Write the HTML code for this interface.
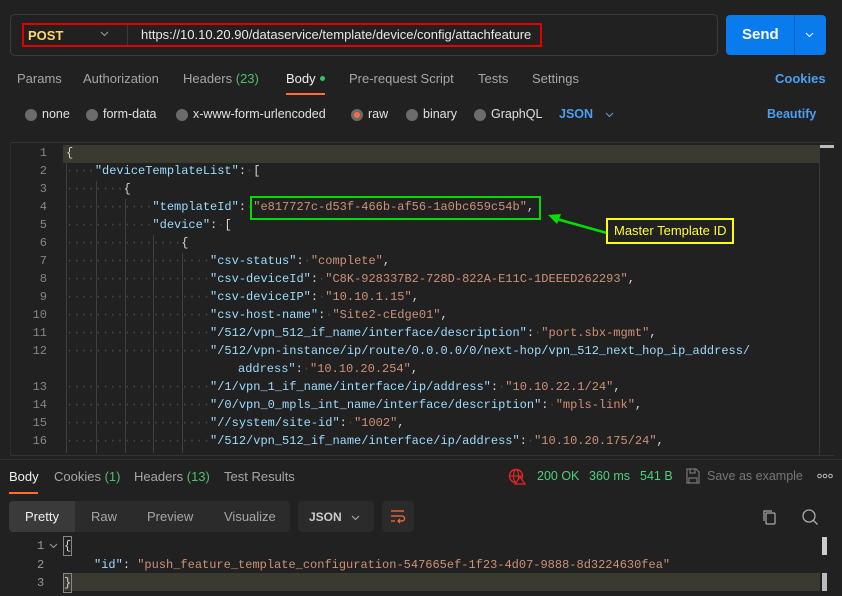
<!DOCTYPE html>
<html><head><meta charset="utf-8">
<style>
*{margin:0;padding:0;box-sizing:border-box}
body{width:842px;height:596px;background:#212121;font-family:"Liberation Sans",sans-serif;color:#d6d6d6;position:relative;overflow:hidden}
.a{position:absolute;white-space:nowrap}
.t{font-size:13px;color:#a6a6a6}
.rd{position:absolute;width:12px;height:12px;border-radius:50%;background:#6b6b6b}
.mono{font-family:"Liberation Mono",monospace;font-size:12px;line-height:18px}
.ln{position:absolute;width:47px;text-align:right;color:#858585}
.k{color:#9cdcfe}.s{color:#ce9178}.p{color:#d4d4d4}.d{color:#4a4a4a}
.g{position:absolute;width:1px;background:#404040}
</style></head><body>
<!-- URL bar -->
<div class="a" style="left:10px;top:14px;width:708px;height:42px;border:1px solid #3c3c3c;border-radius:5px"></div>
<div class="a" style="left:22px;top:23px;width:520px;height:24px;border:2px solid #e00000"></div>
<div class="a" style="left:127px;top:25px;width:1px;height:20px;background:#3a3a3a"></div>
<div class="a" style="left:28px;top:28px;font-size:13px;font-weight:bold;color:#ffd86b">POST</div>
<svg class="a" style="left:100px;top:31px" width="9" height="6"><path d="M1 1l3.5 3.5L8 1" fill="none" stroke="#999" stroke-width="1.1"/></svg>
<div class="a" style="left:141px;top:27px;font-size:13px;color:#e8e8e8">https://10.10.20.90/dataservice/template/device/config/attachfeature</div>
<div class="a" style="left:726px;top:15px;width:100px;height:40px;background:#097bed;border-radius:4px"></div>
<div class="a" style="left:794px;top:15px;width:1px;height:40px;background:#0a62be"></div>
<div class="a" style="left:742px;top:26px;font-size:15px;font-weight:bold;color:#fff">Send</div>
<svg class="a" style="left:805px;top:32px" width="9" height="6"><path d="M1 1l3.5 3.5L8 1" fill="none" stroke="#fff" stroke-width="1.1"/></svg>
<!-- tabs -->
<div class="a t" style="left:17px;top:71px">Params</div>
<div class="a t" style="left:83px;top:71px">Authorization</div>
<div class="a t" style="left:183px;top:71px">Headers <span style="color:#4fbf6e">(23)</span></div>
<div class="a t" style="left:286px;top:71px;color:#f0f0f0">Body</div>
<div class="a" style="left:320px;top:76px;width:5px;height:5px;border-radius:50%;background:#33c46b"></div>
<div class="a" style="left:286px;top:93px;width:39px;height:2px;background:#ff6c37"></div>
<div class="a t" style="left:349px;top:71px">Pre-request Script</div>
<div class="a t" style="left:478px;top:71px">Tests</div>
<div class="a t" style="left:532px;top:71px">Settings</div>
<div class="a" style="left:775px;top:71px;font-size:13px;font-weight:bold;color:#4d9ff0">Cookies</div>
<!-- radios -->
<div class="rd" style="left:25px;top:109px"></div><div class="a" style="left:42px;top:107px;font-size:12.5px;color:#e0e0e0">none</div>
<div class="rd" style="left:86px;top:109px"></div><div class="a" style="left:103px;top:107px;font-size:12.5px;color:#e0e0e0">form-data</div>
<div class="rd" style="left:176px;top:109px"></div><div class="a" style="left:193px;top:107px;font-size:12.5px;color:#e0e0e0">x-www-form-urlencoded</div>
<div class="rd" style="left:351px;top:109px;background:#ff6c37;border:3px solid #6b6b6b"></div><div class="a" style="left:368px;top:107px;font-size:12.5px;color:#e0e0e0">raw</div>
<div class="rd" style="left:406px;top:109px"></div><div class="a" style="left:423px;top:107px;font-size:12.5px;color:#e0e0e0">binary</div>
<div class="rd" style="left:474px;top:109px"></div><div class="a" style="left:491px;top:107px;font-size:12.5px;color:#e0e0e0">GraphQL</div>
<div class="a" style="left:559px;top:107px;font-size:12.5px;font-weight:bold;color:#4d9ff0">JSON</div>
<svg class="a" style="left:605px;top:112px" width="9" height="6"><path d="M1 1l3.5 3.5L8 1" fill="none" stroke="#4d9ff0" stroke-width="1.1"/></svg>
<div class="a" style="left:767px;top:107px;font-size:12.5px;font-weight:bold;color:#4d9ff0">Beautify</div>
<!-- editor -->
<div class="a" style="left:10px;top:142px;width:824px;height:314px;border-top:1px solid #333;border-left:1px solid #2b2b2b;border-bottom:1px solid #333"></div>
<div class="a" style="left:63px;top:145px;width:757px;height:18px;background:#3a3a30"></div>
<div class="a" style="left:819px;top:145px;width:1px;height:310px;background:#3a3a3a"></div>
<div class="a" style="left:820px;top:145px;width:14px;height:3px;background:#bbb"></div>
<div class="g" style="left:66px;top:163px;height:290px"></div>
<div class="g" style="left:96px;top:181px;height:272px"></div>
<div class="g" style="left:125px;top:199px;height:254px"></div>
<div class="g" style="left:153px;top:235px;height:218px"></div>
<div class="g" style="left:182px;top:253px;height:200px"></div>
<div class="mono">
<div class="ln" style="top:144px">1</div><div class="a p" style="left:66px;top:144px">{</div>
<div class="ln" style="top:162px">2</div><div class="a" style="left:66px;top:162px"><span class="d">····</span><span class="k">"deviceTemplateList"</span><span class="p">:<span class="d">·</span>[</span></div>
<div class="ln" style="top:180px">3</div><div class="a" style="left:66px;top:180px"><span class="d">········</span><span class="p">{</span></div>
<div class="ln" style="top:198px">4</div><div class="a" style="left:66px;top:198px"><span class="d">············</span><span class="k">"templateId"</span><span class="p">:<span class="d">·</span></span><span class="s">"e817727c-d53f-466b-af56-1a0bc659c54b"</span><span class="p">,</span></div>
<div class="ln" style="top:216px">5</div><div class="a" style="left:66px;top:216px"><span class="d">············</span><span class="k">"device"</span><span class="p">:<span class="d">·</span>[</span></div>
<div class="ln" style="top:234px">6</div><div class="a" style="left:66px;top:234px"><span class="d">················</span><span class="p">{</span></div>
<div class="ln" style="top:252px">7</div><div class="a" style="left:66px;top:252px"><span class="d">····················</span><span class="k">"csv-status"</span><span class="p">:<span class="d">·</span></span><span class="s">"complete"</span><span class="p">,</span></div>
<div class="ln" style="top:270px">8</div><div class="a" style="left:66px;top:270px"><span class="d">····················</span><span class="k">"csv-deviceId"</span><span class="p">:<span class="d">·</span></span><span class="s">"C8K-928337B2-728D-822A-E11C-1DEEED262293"</span><span class="p">,</span></div>
<div class="ln" style="top:288px">9</div><div class="a" style="left:66px;top:288px"><span class="d">····················</span><span class="k">"csv-deviceIP"</span><span class="p">:<span class="d">·</span></span><span class="s">"10.10.1.15"</span><span class="p">,</span></div>
<div class="ln" style="top:306px">10</div><div class="a" style="left:66px;top:306px"><span class="d">····················</span><span class="k">"csv-host-name"</span><span class="p">:<span class="d">·</span></span><span class="s">"Site2-cEdge01"</span><span class="p">,</span></div>
<div class="ln" style="top:324px">11</div><div class="a" style="left:66px;top:324px"><span class="d">····················</span><span class="k">"/512/vpn_512_if_name/interface/description"</span><span class="p">:<span class="d">·</span></span><span class="s">"port.sbx-mgmt"</span><span class="p">,</span></div>
<div class="ln" style="top:342px">12</div><div class="a" style="left:66px;top:342px"><span class="d">····················</span><span class="k">"/512/vpn-instance/ip/route/0.0.0.0/0/next-hop/vpn_512_next_hop_ip_address/</span></div>
<div class="a" style="left:238px;top:360px"><span class="k">address"</span><span class="p">:<span class="d">·</span></span><span class="s">"10.10.20.254"</span><span class="p">,</span></div>
<div class="ln" style="top:378px">13</div><div class="a" style="left:66px;top:378px"><span class="d">····················</span><span class="k">"/1/vpn_1_if_name/interface/ip/address"</span><span class="p">:<span class="d">·</span></span><span class="s">"10.10.22.1/24"</span><span class="p">,</span></div>
<div class="ln" style="top:396px">14</div><div class="a" style="left:66px;top:396px"><span class="d">····················</span><span class="k">"/0/vpn_0_mpls_int_name/interface/description"</span><span class="p">:<span class="d">·</span></span><span class="s">"mpls-link"</span><span class="p">,</span></div>
<div class="ln" style="top:414px">15</div><div class="a" style="left:66px;top:414px"><span class="d">····················</span><span class="k">"//system/site-id"</span><span class="p">:<span class="d">·</span></span><span class="s">"1002"</span><span class="p">,</span></div>
<div class="ln" style="top:432px">16</div><div class="a" style="left:66px;top:432px"><span class="d">····················</span><span class="k">"/512/vpn_512_if_name/interface/ip/address"</span><span class="p">:<span class="d">·</span></span><span class="s">"10.10.20.175/24"</span><span class="p">,</span></div>
</div>
<!-- annotations -->
<div class="a" style="left:250px;top:196px;width:291px;height:24px;border:2px solid #00e000"></div>
<svg class="a" style="left:545px;top:210px" width="64" height="25"><line x1="62" y1="23" x2="8" y2="8" stroke="#00e000" stroke-width="2.5"/><polygon points="3,5 16,4 12,14" fill="#00e000"/></svg>
<div class="a" style="left:606px;top:218px;width:128px;height:26px;border:2px solid #ffff00;color:#ffff33;font-size:13px;padding:3px 0 0 6px">Master Template ID</div>
<!-- response -->
<div class="a" style="left:0;top:459px;width:842px;height:1px;background:#333"></div>
<div class="a" style="left:9px;top:469px;font-size:13px;color:#f0f0f0">Body</div>
<div class="a" style="left:9px;top:492px;width:29px;height:2px;background:#ff6c37"></div>
<div class="a t" style="left:54px;top:469px">Cookies <span style="color:#4fbf6e">(1)</span></div>
<div class="a t" style="left:134px;top:469px">Headers <span style="color:#4fbf6e">(13)</span></div>
<div class="a t" style="left:224px;top:469px">Test Results</div>
<svg class="a" style="left:508px;top:468px" width="18" height="17"><circle cx="8" cy="8" r="6.5" fill="none" stroke="#e52525" stroke-width="1.4"/><ellipse cx="8" cy="8" rx="2.5" ry="6.5" fill="none" stroke="#e52525" stroke-width="1.2"/><line x1="1.5" y1="8" x2="14.5" y2="8" stroke="#e52525" stroke-width="1.2"/><polygon points="12,9 17,16 7,16" fill="#212121" stroke="#e52525" stroke-width="1.2"/></svg>
<div class="a" style="left:537px;top:469px;font-size:12.5px;color:#4fcf7c">200 OK</div>
<div class="a" style="left:589px;top:469px;font-size:12.5px;color:#4fcf7c">360 ms</div>
<div class="a" style="left:640px;top:469px;font-size:12.5px;color:#4fcf7c">541 B</div>
<svg class="a" style="left:686px;top:468px" width="14" height="16"><path d="M1 1h9l3 3v11H1z M4 1v4h5V1 M3 15v-5h8v5" fill="none" stroke="#777" stroke-width="1.2"/></svg>
<div class="a" style="left:707px;top:469px;font-size:12.5px;color:#777">Save as example</div>
<svg class="a" style="left:817px;top:473px" width="16" height="6"><circle cx="2.5" cy="3" r="1.8" fill="none" stroke="#bbb"/><circle cx="8" cy="3" r="1.8" fill="none" stroke="#bbb"/><circle cx="13.5" cy="3" r="1.8" fill="none" stroke="#bbb"/></svg>
<div class="a" style="left:9px;top:501px;width:281px;height:31px;background:#2b2b2b;border-radius:4px"></div>
<div class="a" style="left:9px;top:501px;width:66px;height:31px;background:#3a3a3a;border-radius:4px 0 0 4px"></div>
<div class="a" style="left:25px;top:509px;font-size:13px;color:#f0f0f0">Pretty</div>
<div class="a t" style="left:91px;top:509px">Raw</div>
<div class="a t" style="left:147px;top:509px">Preview</div>
<div class="a t" style="left:224px;top:509px">Visualize</div>
<div class="a" style="left:298px;top:501px;width:76px;height:31px;background:#2b2b2b;border-radius:4px"></div>
<div class="a" style="left:309px;top:510px;font-size:12px;font-weight:bold;color:#ccc">JSON</div>
<svg class="a" style="left:351px;top:515px" width="9" height="6"><path d="M1 1l3.5 3.5L8 1" fill="none" stroke="#aaa" stroke-width="1.1"/></svg>
<div class="a" style="left:382px;top:501px;width:32px;height:31px;background:#2b2b2b;border-radius:4px"></div>
<svg class="a" style="left:389px;top:508px" width="18" height="18"><path d="M2 3h13 M2 8h11a2.5 2.5 0 0 1 0 5H9 M11 11l-2 2 2 2 M2 13h4" fill="none" stroke="#ff6c37" stroke-width="1.2"/></svg>
<svg class="a" style="left:761px;top:508px" width="18" height="18"><rect x="5" y="5" width="9" height="11" rx="1" fill="none" stroke="#aaa" stroke-width="1.2"/><path d="M3 13V3h8" fill="none" stroke="#aaa" stroke-width="1.2"/></svg>
<svg class="a" style="left:801px;top:508px" width="18" height="18"><circle cx="8" cy="8" r="6" fill="none" stroke="#aaa" stroke-width="1.3"/><line x1="12.5" y1="12.5" x2="16.5" y2="16.5" stroke="#aaa" stroke-width="1.3"/></svg>
<div class="a" style="left:63px;top:573px;width:757px;height:18px;background:#3a3a30"></div>
<div class="a" style="left:822px;top:537px;width:5px;height:18px;background:#ccc"></div>
<div class="a" style="left:822px;top:573px;width:5px;height:18px;background:#bbb"></div>
<div class="mono" style="font-size:12px">
<div class="a" style="left:37px;top:537px;color:#999">1</div>
<svg class="a" style="left:49px;top:543px" width="9" height="6"><path d="M1 1l3.5 3.5L8 1" fill="none" stroke="#999" stroke-width="1.1"/></svg>
<div class="a p" style="left:64px;top:537px;outline:1px solid #888">{</div>
<div class="a" style="left:37px;top:556px;color:#999">2</div>
<div class="a" style="left:94px;top:556px"><span class="k">"id"</span><span class="p">: </span><span class="s">"push_feature_template_configuration-547665ef-1f23-4d07-9888-8d3224630fea"</span></div>
<div class="a" style="left:37px;top:574px;color:#999">3</div>
<div class="a p" style="left:64px;top:574px;outline:1px solid #888">}</div>
</div>
</body></html>
